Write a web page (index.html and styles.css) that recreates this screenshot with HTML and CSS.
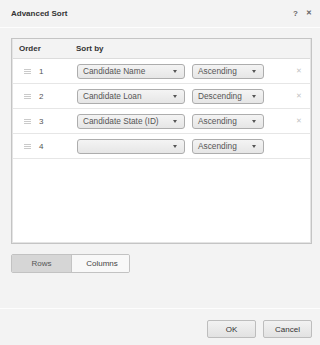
FILE: index.html
```html
<!DOCTYPE html>
<html>
<head>
<meta charset="utf-8">
<link rel="stylesheet" href="styles.css">
</head>
<body>
<div class="dialog">
  <div class="header">
    <span class="title">Advanced Sort</span>
    <span class="tools"><span class="help">?</span><span class="close">&#x2715;</span></span>
  </div>
  <div class="content">
    <div class="table">
      <div class="thead">
        <span class="c-order">Order</span>
        <span class="c-sort">Sort by</span>
      </div>
      <div class="row">
        <span class="handle"><i></i><i></i><i></i></span>
        <span class="num">1</span>
        <span class="sel wide">Candidate Name<b class="caret"></b></span>
        <span class="sel narrow">Ascending<b class="caret"></b></span>
        <span class="del">&#x2715;</span>
      </div>
      <div class="row">
        <span class="handle"><i></i><i></i><i></i></span>
        <span class="num">2</span>
        <span class="sel wide">Candidate Loan<b class="caret"></b></span>
        <span class="sel narrow">Descending<b class="caret"></b></span>
        <span class="del">&#x2715;</span>
      </div>
      <div class="row">
        <span class="handle"><i></i><i></i><i></i></span>
        <span class="num">3</span>
        <span class="sel wide">Candidate State (ID)<b class="caret"></b></span>
        <span class="sel narrow">Ascending<b class="caret"></b></span>
        <span class="del">&#x2715;</span>
      </div>
      <div class="row">
        <span class="handle"><i></i><i></i><i></i></span>
        <span class="num">4</span>
        <span class="sel wide"><b class="caret"></b></span>
        <span class="sel narrow">Ascending<b class="caret"></b></span>
      </div>
    </div>
    <div class="seg">
      <span class="seg-btn active">Rows</span>
      <span class="seg-btn">Columns</span>
    </div>
  </div>
  <div class="footer">
    <span class="btn">OK</span>
    <span class="btn">Cancel</span>
  </div>
</div>
</body>
</html>
```

FILE: styles.css
```css
* { box-sizing: border-box; }
html, body { margin: 0; padding: 0; }
body {
  width: 320px;
  height: 345px;
  background: #f3f3f3;
  font-family: "Liberation Sans", Arial, Helvetica, sans-serif;
  font-size: 8px;
  color: #333;
  overflow: hidden;
}
.dialog {
  width: 320px;
  height: 345px;
  display: flex;
  flex-direction: column;
}
.header {
  height: 28px;
  padding: 0 8px 1px 11px;
  display: flex;
  align-items: center;
  justify-content: space-between;
  border-bottom: 1px solid #fdfdfd;
}
.title { font-weight: bold; font-size: 8px; color: #333; }
.tools { display: flex; gap: 8px; color: #666; font-weight: bold; font-size: 8px; }
.close { font-size: 7px; }
.content {
  flex: 1;
  padding: 10px 8px 0 11px;
  display: flex;
  flex-direction: column;
  gap: 10px;
}
.table {
  height: 206px;
  border: 1px solid #c4c4c4;
  box-shadow: inset 0 0 0 1px #e4e4e4;
  background: #fff;
  display: flex;
  flex-direction: column;
  padding: 0 1px 1px 1px;
}
.thead {
  height: 20px;
  flex: none;
  display: flex;
  align-items: center;
  background: #f3f3f3;
  border-bottom: 1px solid #dcdcdc;
  font-weight: bold;
  color: #333;
}
.c-order { width: 63px; padding-left: 6px; }
.c-sort { padding-left: 0; }
.row {
  height: 25px;
  flex: none;
  display: flex;
  align-items: center;
  border-bottom: 1px solid #e6e6e6;
}
.handle {
  width: 7px;
  margin-left: 11px;
  display: flex;
  flex-direction: column;
  gap: 1px;
}
.handle i {
  display: block;
  height: 1px;
  background: #cacaca;
}
.num { width: 46px; padding-left: 8px; color: #555; }
.sel {
  height: 15px;
  border: 1px solid #adadad;
  border-radius: 3px;
  background: linear-gradient(#f4f4f4, #e6e6e6);
  display: flex;
  align-items: center;
  justify-content: space-between;
  padding: 0 7px 0 5px;
  color: #555;
  font-size: 8.3px;
}
.wide { width: 108px; }
.narrow { width: 72px; margin-left: 7px; }
.caret {
  width: 0;
  height: 0;
  border-left: 2.5px solid transparent;
  border-right: 2.5px solid transparent;
  border-top: 3px solid #555;
  margin-left: auto;
}
.del { margin-left: 32px; color: #c4c4c4; font-size: 7px; }
.seg {
  display: flex;
  width: 119px;
  height: 19px;
  border: 1px solid #c2c2c2;
  border-radius: 2px;
  overflow: hidden;
}
.seg-btn {
  flex: none;
  width: 60px;
  display: flex;
  align-items: center;
  justify-content: center;
  background: #f8f8f8;
  color: #444;
}
.seg-btn.active {
  background: #d6d6d6;
  border-right: 1px solid #c4c4c4;
  color: #555;
}
.footer {
  height: 37px;
  border-top: 1px solid #fdfdfd;
  display: flex;
  justify-content: flex-end;
  align-items: flex-start;
  gap: 7px;
  padding: 11px 8px 0 0;
}
.btn {
  width: 49px;
  height: 18px;
  border: 1px solid #bdbdbd;
  border-radius: 2px;
  background: linear-gradient(#f2f2f2, #e2e2e2);
  display: flex;
  align-items: center;
  justify-content: center;
  color: #333;
}
```
